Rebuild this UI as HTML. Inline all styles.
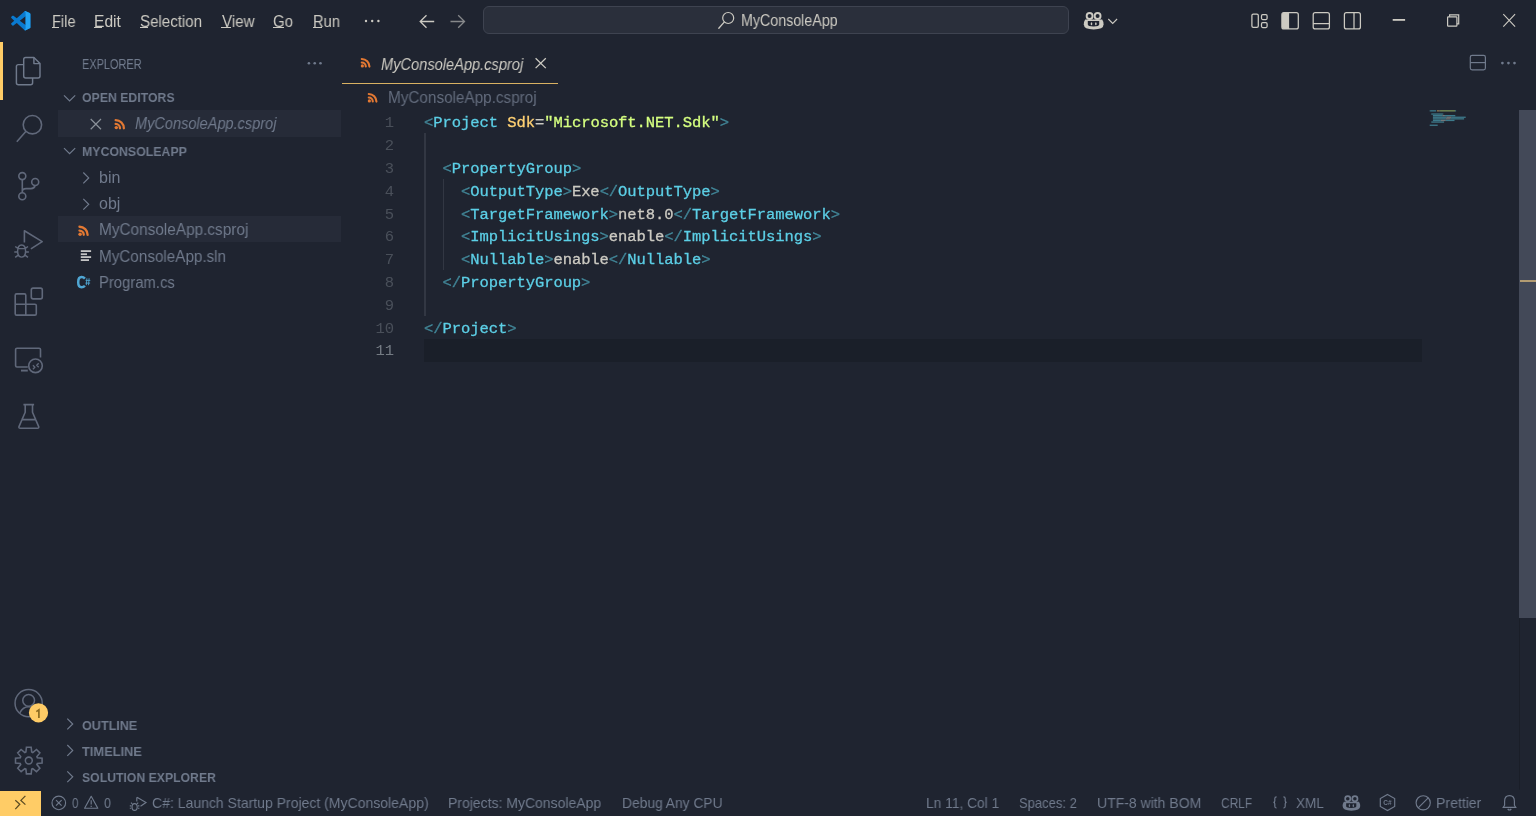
<!DOCTYPE html>
<html><head><meta charset="utf-8">
<style>
html,body{margin:0;padding:0;width:1536px;height:816px;overflow:hidden;background:#1F2430;}
body{position:relative;font-family:"Liberation Sans",sans-serif;}
.a{position:absolute;}
.t{position:absolute;white-space:nowrap;line-height:1;will-change:transform;}
.code{will-change:transform;position:absolute;left:423.9px;font-family:"Liberation Mono",monospace;font-size:15.5px;letter-spacing:-0.06px;line-height:22.8px;white-space:pre;color:#CCCAC2;-webkit-text-stroke:0.3px;}
.ln{will-change:transform;position:absolute;font-family:"Liberation Mono",monospace;font-size:15.5px;letter-spacing:-0.06px;line-height:22.8px;white-space:pre;text-align:right;width:60px;color:rgba(138,145,153,0.4);}
.tg{color:#5CCFE6}.pu{color:rgba(92,207,230,0.5)}.at{color:#FFD173}.st{color:#D5FF80}.op{color:#CCCAC2}
#ov{position:absolute;left:0;top:0;width:1536px;height:816px;overflow:visible}
</style></head><body>
<!-- menu underlines -->
<div class="a" style="left:51.6px;top:27px;width:7.5px;height:1.1px;background:#CCCAC2"></div><div class="a" style="left:93.8px;top:27px;width:8.3px;height:1.1px;background:#CCCAC2"></div><div class="a" style="left:139.8px;top:27px;width:8.2px;height:1.1px;background:#CCCAC2"></div><div class="a" style="left:221.4px;top:27px;width:9.3px;height:1.1px;background:#CCCAC2"></div><div class="a" style="left:273.4px;top:27px;width:10.4px;height:1.1px;background:#CCCAC2"></div><div class="a" style="left:312.5px;top:27px;width:9.1px;height:1.1px;background:#CCCAC2"></div>
<!-- command center -->
<div class="a" style="left:483.3px;top:6px;width:583.3px;height:26.4px;border:1px solid #3e4350;border-radius:6px;background:#2a2f3b"></div>
<!-- activity bar active indicator -->
<div class="a" style="left:0;top:42px;width:2.5px;height:57.6px;background:#FFCC66"></div>
<!-- sidebar selections -->
<div class="a" style="left:57.6px;top:110.4px;width:283.4px;height:26.4px;background:#262b38"></div>
<div class="a" style="left:57.6px;top:216px;width:283.4px;height:26.4px;background:#262b38"></div>
<!-- tab underline -->
<div class="a" style="left:342px;top:82.8px;width:216px;height:1.6px;background:#d9b162"></div>
<!-- current line -->
<div class="a" style="left:424.3px;top:338.8px;width:998px;height:22.8px;background:#1A1F29"></div>
<!-- scrollbar -->
<div class="a" style="left:1519px;top:110.4px;width:17px;height:507.8px;background:#434958"></div>
<div class="a" style="left:1519.5px;top:279.8px;width:16.5px;height:2.6px;background:#b39c72"></div>
<!-- status remote -->
<div class="a" style="left:0;top:790.6px;width:41.1px;height:25.4px;background:#FFCC66"></div>
<div class="a" style="left:424.4px;top:133.20px;width:1.2px;height:182.40px;background:#323743"></div>
<div class="a" style="left:442.9px;top:178.80px;width:1.2px;height:91.20px;background:#323743"></div>
<div class="code" style="top:112.35px"><span class="pu">&lt;</span><span class="tg">Project</span><span class="op"> </span><span class="at">Sdk</span><span class="op">=</span><span class="st">"Microsoft.NET.Sdk"</span><span class="pu">&gt;</span></div>
<div class="ln" style="left:333.50px;top:112.35px;color:rgba(138,145,153,0.4)">1</div>
<div class="code" style="top:135.15px"></div>
<div class="ln" style="left:333.50px;top:135.15px;color:rgba(138,145,153,0.4)">2</div>
<div class="code" style="top:157.95px"><span class="op">  </span><span class="pu">&lt;</span><span class="tg">PropertyGroup</span><span class="pu">&gt;</span></div>
<div class="ln" style="left:333.50px;top:157.95px;color:rgba(138,145,153,0.4)">3</div>
<div class="code" style="top:180.75px"><span class="op">    </span><span class="pu">&lt;</span><span class="tg">OutputType</span><span class="pu">&gt;</span><span class="op">Exe</span><span class="pu">&lt;/</span><span class="tg">OutputType</span><span class="pu">&gt;</span></div>
<div class="ln" style="left:333.50px;top:180.75px;color:rgba(138,145,153,0.4)">4</div>
<div class="code" style="top:203.55px"><span class="op">    </span><span class="pu">&lt;</span><span class="tg">TargetFramework</span><span class="pu">&gt;</span><span class="op">net8.0</span><span class="pu">&lt;/</span><span class="tg">TargetFramework</span><span class="pu">&gt;</span></div>
<div class="ln" style="left:333.50px;top:203.55px;color:rgba(138,145,153,0.4)">5</div>
<div class="code" style="top:226.35px"><span class="op">    </span><span class="pu">&lt;</span><span class="tg">ImplicitUsings</span><span class="pu">&gt;</span><span class="op">enable</span><span class="pu">&lt;/</span><span class="tg">ImplicitUsings</span><span class="pu">&gt;</span></div>
<div class="ln" style="left:333.50px;top:226.35px;color:rgba(138,145,153,0.4)">6</div>
<div class="code" style="top:249.15px"><span class="op">    </span><span class="pu">&lt;</span><span class="tg">Nullable</span><span class="pu">&gt;</span><span class="op">enable</span><span class="pu">&lt;/</span><span class="tg">Nullable</span><span class="pu">&gt;</span></div>
<div class="ln" style="left:333.50px;top:249.15px;color:rgba(138,145,153,0.4)">7</div>
<div class="code" style="top:271.95px"><span class="op">  </span><span class="pu">&lt;/</span><span class="tg">PropertyGroup</span><span class="pu">&gt;</span></div>
<div class="ln" style="left:333.50px;top:271.95px;color:rgba(138,145,153,0.4)">8</div>
<div class="code" style="top:294.75px"></div>
<div class="ln" style="left:333.50px;top:294.75px;color:rgba(138,145,153,0.4)">9</div>
<div class="code" style="top:317.55px"><span class="pu">&lt;/</span><span class="tg">Project</span><span class="pu">&gt;</span></div>
<div class="ln" style="left:333.50px;top:317.55px;color:rgba(138,145,153,0.4)">10</div>
<div class="code" style="top:340.35px"></div>
<div class="ln" style="left:333.50px;top:340.35px;color:rgba(138,145,153,0.8)">11</div>
<span class="t" style="left:51.70px;top:13.89px;font-size:15.60px;color:#CCCAC2;transform:scaleX(0.9363);transform-origin:0 0;">File</span>
<span class="t" style="left:94.40px;top:13.89px;font-size:15.60px;color:#CCCAC2;transform:scaleX(0.9851);transform-origin:0 0;">Edit</span>
<span class="t" style="left:139.60px;top:13.89px;font-size:15.60px;color:#CCCAC2;transform:scaleX(0.9673);transform-origin:0 0;">Selection</span>
<span class="t" style="left:221.60px;top:13.89px;font-size:15.60px;color:#CCCAC2;transform:scaleX(0.9733);transform-origin:0 0;">View</span>
<span class="t" style="left:273.20px;top:13.89px;font-size:15.60px;color:#CCCAC2;transform:scaleX(0.9567);transform-origin:0 0;">Go</span>
<span class="t" style="left:312.60px;top:13.89px;font-size:15.60px;color:#CCCAC2;transform:scaleX(0.9406);transform-origin:0 0;">Run</span>
<span class="t" style="left:740.60px;top:12.79px;font-size:15.60px;color:#CCCAC2;transform:scaleX(0.9140);transform-origin:0 0;">MyConsoleApp</span>
<span class="t" style="left:81.90px;top:57.72px;font-size:13.80px;color:#707A8C;transform:scaleX(0.7926);transform-origin:0 0;">EXPLORER</span>
<span class="t" style="left:81.90px;top:91.28px;font-size:13.60px;color:#707A8C;transform:scaleX(0.9034);transform-origin:0 0;font-weight:700;">OPEN EDITORS</span>
<span class="t" style="left:134.90px;top:116.49px;font-size:15.60px;color:#707A8C;transform:scaleX(0.9323);transform-origin:0 0;font-style:italic;">MyConsoleApp.csproj</span>
<span class="t" style="left:81.90px;top:144.98px;font-size:13.60px;color:#707A8C;transform:scaleX(0.9074);transform-origin:0 0;font-weight:700;">MYCONSOLEAPP</span>
<span class="t" style="left:98.80px;top:169.59px;font-size:15.60px;color:#707A8C;transform:scaleX(1.0288);transform-origin:0 0;">bin</span>
<span class="t" style="left:99.10px;top:196.19px;font-size:15.60px;color:#707A8C;transform:scaleX(1.0240);transform-origin:0 0;">obj</span>
<span class="t" style="left:98.80px;top:222.29px;font-size:15.60px;color:#707A8C;transform:scaleX(0.9848);transform-origin:0 0;">MyConsoleApp.csproj</span>
<span class="t" style="left:98.80px;top:248.79px;font-size:15.60px;color:#707A8C;transform:scaleX(0.9777);transform-origin:0 0;">MyConsoleApp.sln</span>
<span class="t" style="left:98.80px;top:275.09px;font-size:15.60px;color:#707A8C;transform:scaleX(0.9499);transform-origin:0 0;">Program.cs</span>
<span class="t" style="left:81.90px;top:718.58px;font-size:13.60px;color:#707A8C;transform:scaleX(0.9263);transform-origin:0 0;font-weight:700;">OUTLINE</span>
<span class="t" style="left:81.90px;top:745.08px;font-size:13.60px;color:#707A8C;transform:scaleX(0.9449);transform-origin:0 0;font-weight:700;">TIMELINE</span>
<span class="t" style="left:81.90px;top:771.48px;font-size:13.60px;color:#707A8C;transform:scaleX(0.8999);transform-origin:0 0;font-weight:700;">SOLUTION EXPLORER</span>
<span class="t" style="left:380.70px;top:56.99px;font-size:15.60px;color:#CCCAC2;transform:scaleX(0.9376);transform-origin:0 0;font-style:italic;">MyConsoleApp.csproj</span>
<span class="t" style="left:388.20px;top:89.89px;font-size:15.60px;color:#636c7d;transform:scaleX(0.9802);transform-origin:0 0;">MyConsoleApp.csproj</span>
<span class="t" style="left:71.90px;top:796.31px;font-size:14.40px;color:#707A8C;transform:scaleX(0.8000);transform-origin:0 0;">0</span>
<span class="t" style="left:104.00px;top:796.31px;font-size:14.40px;color:#707A8C;transform:scaleX(0.8750);transform-origin:0 0;">0</span>
<span class="t" style="left:151.60px;top:796.31px;font-size:14.40px;color:#707A8C;transform:scaleX(0.9740);transform-origin:0 0;">C#: Launch Startup Project (MyConsoleApp)</span>
<span class="t" style="left:448.40px;top:796.31px;font-size:14.40px;color:#707A8C;transform:scaleX(0.9721);transform-origin:0 0;">Projects: MyConsoleApp</span>
<span class="t" style="left:622.00px;top:796.31px;font-size:14.40px;color:#707A8C;transform:scaleX(0.9590);transform-origin:0 0;">Debug Any CPU</span>
<span class="t" style="left:926.10px;top:796.31px;font-size:14.40px;color:#707A8C;transform:scaleX(0.9569);transform-origin:0 0;">Ln 11, Col 1</span>
<span class="t" style="left:1019.30px;top:796.31px;font-size:14.40px;color:#707A8C;transform:scaleX(0.9047);transform-origin:0 0;">Spaces: 2</span>
<span class="t" style="left:1096.70px;top:796.31px;font-size:14.40px;color:#707A8C;transform:scaleX(0.9729);transform-origin:0 0;">UTF-8 with BOM</span>
<span class="t" style="left:1220.90px;top:796.31px;font-size:14.40px;color:#707A8C;transform:scaleX(0.8271);transform-origin:0 0;">CRLF</span>
<span class="t" style="left:1295.50px;top:796.31px;font-size:14.40px;color:#707A8C;transform:scaleX(0.9426);transform-origin:0 0;">XML</span>
<span class="t" style="left:1436.20px;top:796.31px;font-size:14.40px;color:#707A8C;transform:scaleX(0.9784);transform-origin:0 0;">Prettier</span>
<svg id="ov" width="1536" height="816" viewBox="0 0 1536 816"><g transform="translate(11.1,11.0) scale(0.193)"><path fill="#0A7ACF" d="M96.46 10.8L75.86.87a6.23 6.23 0 0 0-7.1 1.2L29.33 38.04 12.15 25a4.16 4.16 0 0 0-5.32.24L1.36 30.2a4.16 4.16 0 0 0 0 6.16L16.25 50 1.36 63.64a4.16 4.16 0 0 0 0 6.16l5.47 4.96a4.16 4.16 0 0 0 5.32.24l17.18-13.04 39.43 35.97a6.23 6.23 0 0 0 7.1 1.2l20.6-9.92A6.25 6.25 0 0 0 100 83.77V16.23a6.25 6.25 0 0 0-3.54-5.43zM75.02 72.7L45.11 50l29.9-22.7v45.4z"/><path fill="#23A3F2" d="M75.86.87a6.23 6.23 0 0 0-7.1 1.2l6.26 4.6V93.33l-6.26 5.4a6.23 6.23 0 0 0 7.1 1.2l20.6-9.92A6.25 6.25 0 0 0 100 83.77V16.23a6.25 6.25 0 0 0-3.54-5.43z"/></g><circle cx="366.0" cy="21" r="1.2" fill="#CCCAC2"/><circle cx="372.2" cy="21" r="1.2" fill="#CCCAC2"/><circle cx="378.4" cy="21" r="1.2" fill="#CCCAC2"/><path d="M434.2 21.5H420.2M426.5 15.3L420.2 21.5L426.5 27.8" fill="none" stroke="#CCCAC2" stroke-width="1.3"/><path d="M450.5 21.5H464.5M458.2 15.3L464.5 21.5L458.2 27.8" fill="none" stroke="#86888a" stroke-width="1.3"/><circle cx="728.2" cy="18" r="5.5" fill="none" stroke="#CCCAC2" stroke-width="1.2"/><path d="M724.2 22.1L718.8 28.2" fill="none" stroke="#CCCAC2" stroke-width="1.3" stroke-linecap="round"/><g transform="translate(1083.80,12.00) scale(1.000) translate(-1083.8,-12)"><path d="M1085.2 19.4Q1083.8 21.5 1083.8 24.2Q1083.8 29.4 1093.7 29.4Q1103.6 29.4 1103.6 24.2Q1103.6 21.5 1102.2 19.4Z" fill="#CCCAC2"/><circle cx="1089.6" cy="16" r="2.95" fill="#1F2430" stroke="#CCCAC2" stroke-width="1.9"/><circle cx="1097.6" cy="16" r="2.95" fill="#1F2430" stroke="#CCCAC2" stroke-width="1.9"/><path d="M1087.8 21H1099.2V24.5Q1099.2 26.4 1093.5 26.4Q1087.8 26.4 1087.8 24.5Z" fill="#1F2430"/><ellipse cx="1091.5" cy="23.75" rx="0.8" ry="1.5" fill="#CCCAC2"/><ellipse cx="1095.85" cy="23.75" rx="0.8" ry="1.5" fill="#CCCAC2"/></g><path d="M1108.3 19 L1112.7 23.4 L1117.1 19" fill="none" stroke="#CCCAC2" stroke-width="1.1"/><g fill="none" stroke="#CCCAC2" stroke-width="1.25"><rect x="1251.9" y="14.1" width="6.4" height="13.2" rx="1.4"/><rect x="1261.5" y="14.7" width="5.6" height="4.8" rx="1.2"/><rect x="1261.5" y="22.7" width="5.6" height="4.8" rx="1.2"/><rect x="1281.9" y="12.7" width="16.4" height="16.2" rx="2"/><rect x="1313.2" y="12.7" width="16.2" height="16.2" rx="2"/><path d="M1313.2 23.6H1329.4"/><rect x="1344.4" y="12.7" width="16" height="16.2" rx="2"/><path d="M1354 12.7V28.9"/></g><path d="M1283.9 12.7H1289.1V28.9H1283.9Q1281.9 28.9 1281.9 26.9V14.7Q1281.9 12.7 1283.9 12.7Z" fill="#CCCAC2"/><rect x="1392.7" y="19" width="12.4" height="1.8" fill="#CCCAC2"/><g fill="none" stroke="#CCCAC2" stroke-width="1.2"><rect x="1447.6" y="16.8" width="9.3" height="9.3" rx="0.6"/><path d="M1449.6 16.8V14.8H1458.7V23.9H1456.9"/></g><path d="M1503.3 14.2L1515.1 26.7M1515.1 14.2L1503.3 26.7" fill="none" stroke="#CCCAC2" stroke-width="1.1"/><g fill="none" stroke="#707A8C" stroke-width="1.45" stroke-linejoin="round"><path d="M25.7 57.5H33.9L40 63.6V75.9Q40 77.9 38 77.9H25.7Q23.7 77.9 23.7 75.9V59.5Q23.7 57.5 25.7 57.5Z"/><path d="M33.9 57.5V63.6H40"/><path d="M23.7 64.6H18.4Q16.4 64.6 16.4 66.6V82.8Q16.4 84.8 18.4 84.8H30.6Q32.6 84.8 32.6 82.8V77.9"/></g><g fill="none" stroke="#60687A" stroke-width="1.6" stroke-linejoin="round"><circle cx="32.4" cy="124.7" r="9.2"/><path d="M26 131.3L16.8 141.8" stroke-width="1.6"/><circle cx="22.3" cy="176.1" r="3.5"/><circle cx="35.2" cy="182" r="3.5"/><circle cx="22.3" cy="196.2" r="3.5"/><path d="M22.3 179.6V192.7M35 185.5Q34.5 188.6 31 188.6H26Q22.3 188.6 22.3 191.5"/><path d="M24.4 242.4V230.8L42.2 241.6L30.9 248.9"/><path d="M17.6 251.3Q17.6 244.9 21.6 244.9Q25.6 244.9 25.6 251.3Q25.6 257.1 21.6 257.1Q17.6 257.1 17.6 251.3ZM17.8 248.6H25.4M15.2 246.5L17.9 248.4M28 246.5L25.3 248.4M14.3 252H17.6M28.9 252H25.6M15.2 257.3L17.9 255.3M28 257.3L25.3 255.3" stroke-width="1.45"/><path d="M16.6 293.9H24.4Q25.8 293.9 25.8 295.3V304.2H34.9Q36.3 304.2 36.3 305.6V313.7Q36.3 315.1 34.9 315.1H16.6Q15.2 315.1 15.2 313.7V295.3Q15.2 293.9 16.6 293.9Z"/><path d="M15.2 304.2H25.8V315.1"/><rect x="31.3" y="288.1" width="11" height="10.8" rx="1.8"/><path d="M27.8 367H17Q15.6 367 15.6 365.6V349.6Q15.6 348.2 17 348.2H39.1Q40.5 348.2 40.5 349.6V357.5"/><path d="M21 370.6H27.8" stroke-width="1.9"/><circle cx="35.5" cy="365.8" r="6.8"/><path d="M32.9 365.3L34.9 367.2L32.9 369.2M38.7 363.2L36.7 365.2L38.7 367.2" stroke-width="1.3"/><path d="M23.4 404.6H34.1M25.2 404.6V412.3L19 426.6Q18.5 428.3 20.3 428.3H37.4Q39.2 428.3 38.7 426.6L32.5 412.3V404.6M21.3 419.6H36.4"/><circle cx="28.65" cy="703.2" r="13.6" stroke-width="1.5"/><circle cx="28.65" cy="700.35" r="5.9" stroke-width="1.5"/><path d="M19.8 712.8Q23 706.8 28.6 706.8Q34.2 706.8 37.4 712.8" stroke-width="1.5"/></g><path d="M25.90 752.08 L26.41 747.31 L31.19 747.31 L31.70 752.08 L32.77 752.52 L36.50 749.51 L39.89 752.90 L36.88 756.63 L37.32 757.70 L42.09 758.21 L42.09 762.99 L37.32 763.50 L36.88 764.57 L39.89 768.30 L36.50 771.69 L32.77 768.68 L31.70 769.12 L31.19 773.89 L26.41 773.89 L25.90 769.12 L24.83 768.68 L21.10 771.69 L17.71 768.30 L20.72 764.57 L20.28 763.50 L15.51 762.99 L15.51 758.21 L20.28 757.70 L20.72 756.63 L17.71 752.90 L21.10 749.51 L24.83 752.52Z" fill="none" stroke="#60687A" stroke-width="1.55" stroke-linejoin="miter"/><circle cx="28.8" cy="760.6" r="3.45" fill="none" stroke="#60687A" stroke-width="1.55"/><circle cx="38.5" cy="712.8" r="9.6" fill="#FFCC66"/><path d="M36.3 711.6L38.9 709.9V718.1" fill="none" stroke="#8c6b22" stroke-width="1.7"/><circle cx="308.90" cy="63.2" r="1.3" fill="#707A8C"/><circle cx="314.70" cy="63.2" r="1.3" fill="#707A8C"/><circle cx="320.50" cy="63.2" r="1.3" fill="#707A8C"/><path d="M64.0 95.3L69.6 100.9L75.2 95.3" fill="none" stroke="#707A8C" stroke-width="1.2"/><path d="M64.0 148.1L69.6 153.7L75.2 148.1" fill="none" stroke="#707A8C" stroke-width="1.2"/><path d="M83.3 172.5L88.7 177.9L83.3 183.3" fill="none" stroke="#707A8C" stroke-width="1.2"/><path d="M83.3 198.9L88.7 204.3L83.3 209.7" fill="none" stroke="#707A8C" stroke-width="1.2"/><path d="M67.3 718.6L72.7 724.0L67.3 729.4" fill="none" stroke="#707A8C" stroke-width="1.2"/><path d="M67.3 745.0L72.7 750.4L67.3 755.8" fill="none" stroke="#707A8C" stroke-width="1.2"/><path d="M67.3 771.4L72.7 776.8L67.3 782.2" fill="none" stroke="#707A8C" stroke-width="1.2"/><path d="M90.7 119L101 129.2M101 119L90.7 129.2" fill="none" stroke="#8A9199" stroke-width="1.2"/><g transform="translate(114.50,119.00) scale(1.050)" fill="none" stroke="#E37933" stroke-width="2.1" stroke-linecap="round"><circle cx="1.7" cy="8.2" r="1.65" fill="#E37933" stroke="none"/><path d="M1.1 4.7A4.1 4.1 0 0 1 5.2 8.8M1.1 1.1A7.8 7.8 0 0 1 8.9 8.9" stroke-width="2.2"/></g><g transform="translate(78.30,225.60) scale(1.050)" fill="none" stroke="#E37933" stroke-width="2.1" stroke-linecap="round"><circle cx="1.7" cy="8.2" r="1.65" fill="#E37933" stroke="none"/><path d="M1.1 4.7A4.1 4.1 0 0 1 5.2 8.8M1.1 1.1A7.8 7.8 0 0 1 8.9 8.9" stroke-width="2.2"/></g><g transform="translate(360.70,57.90) scale(0.980)" fill="none" stroke="#E37933" stroke-width="2.1" stroke-linecap="round"><circle cx="1.7" cy="8.2" r="1.65" fill="#E37933" stroke="none"/><path d="M1.1 4.7A4.1 4.1 0 0 1 5.2 8.8M1.1 1.1A7.8 7.8 0 0 1 8.9 8.9" stroke-width="2.2"/></g><g transform="translate(367.70,92.90) scale(0.980)" fill="none" stroke="#E37933" stroke-width="2.1" stroke-linecap="round"><circle cx="1.7" cy="8.2" r="1.65" fill="#E37933" stroke="none"/><path d="M1.1 4.7A4.1 4.1 0 0 1 5.2 8.8M1.1 1.1A7.8 7.8 0 0 1 8.9 8.9" stroke-width="2.2"/></g><rect x="80.8" y="250.2" width="10.3" height="1.8" fill="#C4C4C4"/><rect x="80.8" y="253.3" width="6.2" height="1.8" fill="#C4C4C4"/><rect x="80.8" y="256.2" width="10.3" height="1.8" fill="#C4C4C4"/><rect x="80.8" y="259.2" width="8.2" height="1.8" fill="#C4C4C4"/><path d="M84.9 278.6Q83.6 277.1 81.6 277.1Q78.2 277.1 78.2 282.2Q78.2 287.2 81.6 287.2Q83.6 287.2 84.9 285.7" fill="none" stroke="#4FA6D3" stroke-width="2.5"/><path d="M86.9 278.3L86.3 285.2M89.1 278.3L88.5 285.2M85.6 280.4H90.3M85.4 283.1H90.1" fill="none" stroke="#4FA6D3" stroke-width="0.9"/><path d="M535.6 58.2L545.8 68.1M545.8 58.2L535.6 68.1" fill="none" stroke="#CCCAC2" stroke-width="1.3"/><g fill="none" stroke="#707A8C" stroke-width="1.2"><rect x="1470.3" y="55.4" width="15.1" height="14.4" rx="1.8"/><path d="M1470.3 62.6H1485.4"/></g><circle cx="1502.40" cy="63.1" r="1.35" fill="#707A8C"/><circle cx="1508.45" cy="63.1" r="1.35" fill="#707A8C"/><circle cx="1514.50" cy="63.1" r="1.35" fill="#707A8C"/><rect x="1429.70" y="110.20" width="0.80" height="1.3" fill="#5CCFE6" opacity="0.50"/><rect x="1430.50" y="110.20" width="5.60" height="1.3" fill="#5CCFE6" opacity="0.50"/><rect x="1436.90" y="110.20" width="2.40" height="1.3" fill="#FFD173" opacity="0.50"/><rect x="1439.30" y="110.20" width="0.80" height="1.3" fill="#CCCAC2" opacity="0.50"/><rect x="1440.10" y="110.20" width="15.20" height="1.3" fill="#D5FF80" opacity="0.50"/><rect x="1455.30" y="110.20" width="0.80" height="1.3" fill="#5CCFE6" opacity="0.50"/><rect x="1431.30" y="113.40" width="0.80" height="1.3" fill="#5CCFE6" opacity="0.50"/><rect x="1432.10" y="113.40" width="10.40" height="1.3" fill="#5CCFE6" opacity="0.50"/><rect x="1442.50" y="113.40" width="0.80" height="1.3" fill="#5CCFE6" opacity="0.50"/><rect x="1432.90" y="115.00" width="9.60" height="1.3" fill="#5CCFE6" opacity="0.50"/><rect x="1442.50" y="115.00" width="2.40" height="1.3" fill="#CCCAC2" opacity="0.50"/><rect x="1444.90" y="115.00" width="10.40" height="1.3" fill="#5CCFE6" opacity="0.50"/><rect x="1432.90" y="116.60" width="13.60" height="1.3" fill="#5CCFE6" opacity="0.50"/><rect x="1446.50" y="116.60" width="4.80" height="1.3" fill="#CCCAC2" opacity="0.50"/><rect x="1451.30" y="116.60" width="14.40" height="1.3" fill="#5CCFE6" opacity="0.50"/><rect x="1432.90" y="118.20" width="12.80" height="1.3" fill="#5CCFE6" opacity="0.50"/><rect x="1445.70" y="118.20" width="4.80" height="1.3" fill="#CCCAC2" opacity="0.50"/><rect x="1450.50" y="118.20" width="13.60" height="1.3" fill="#5CCFE6" opacity="0.50"/><rect x="1432.90" y="119.80" width="8.00" height="1.3" fill="#5CCFE6" opacity="0.50"/><rect x="1440.90" y="119.80" width="4.80" height="1.3" fill="#CCCAC2" opacity="0.50"/><rect x="1445.70" y="119.80" width="8.80" height="1.3" fill="#5CCFE6" opacity="0.50"/><rect x="1431.30" y="121.40" width="12.80" height="1.3" fill="#5CCFE6" opacity="0.50"/><rect x="1429.70" y="124.60" width="8.00" height="1.3" fill="#5CCFE6" opacity="0.50"/><rect x="1519" y="618.2" width="1" height="171.4" fill="#1a1e28"/><path d="M15.3 800.3L19.8 804.2L15.3 809.2M25.4 795.9L20.9 800.4L25.4 804.6" fill="none" stroke="#5b4b22" stroke-width="1.25"/><g fill="none" stroke="#707A8C" stroke-width="1.15"><circle cx="58.8" cy="802.9" r="6.8"/><path d="M56 800.1L61.6 805.7M61.6 800.1L56 805.7"/><path d="M91.2 796.3L97.8 808.2H84.6Z" stroke-linejoin="round"/><path d="M91.2 800.3V804.6M91.2 805.8V807"/><path d="M137 797.2L146 802.5L140.5 806.3M136.8 797.2V801.6"/><ellipse cx="134.6" cy="807" rx="2.6" ry="3.4"/><path d="M131.2 805.8H129.8M138 805.8H139.4M131.2 808.2H129.8M138 808.2H139.4M132.2 803.8L131 802.6M137 803.8L138.2 802.6"/><path d="M1276.6 796.8Q1274.8 796.8 1274.8 798.6V801Q1274.8 802.4 1273.4 802.4Q1274.8 802.4 1274.8 803.8V806.2Q1274.8 808 1276.6 808M1283.4 796.8Q1285.2 796.8 1285.2 798.6V801Q1285.2 802.4 1286.6 802.4Q1285.2 802.4 1285.2 803.8V806.2Q1285.2 808 1283.4 808"/><path d="M1387.5 794.4L1394.7 798.5V806.5L1387.5 810.6L1380.3 806.5V798.5Z"/><circle cx="1423.2" cy="802.8" r="7.1"/><path d="M1418.2 807.8L1428.2 797.8"/><path d="M1509.5 795.6Q1504.6 795.6 1504.6 801.2V805.2L1503.2 807.4H1515.8L1514.4 805.2V801.2Q1514.4 795.6 1509.5 795.6ZM1507.7 809Q1509.5 811 1511.3 809"/></g><text x="1387.5" y="805.4" text-anchor="middle" style="font-family:Liberation Sans;font-weight:700;font-size:6.5px" fill="#707A8C">C#</text><g transform="translate(1342.60,795.20) scale(0.890) translate(-1083.8,-12)"><path d="M1085.2 19.4Q1083.8 21.5 1083.8 24.2Q1083.8 29.4 1093.7 29.4Q1103.6 29.4 1103.6 24.2Q1103.6 21.5 1102.2 19.4Z" fill="#707A8C"/><circle cx="1089.6" cy="16" r="2.95" fill="#1F2430" stroke="#707A8C" stroke-width="1.9"/><circle cx="1097.6" cy="16" r="2.95" fill="#1F2430" stroke="#707A8C" stroke-width="1.9"/><path d="M1087.8 21H1099.2V24.5Q1099.2 26.4 1093.5 26.4Q1087.8 26.4 1087.8 24.5Z" fill="#1F2430"/><ellipse cx="1091.5" cy="23.75" rx="0.8" ry="1.5" fill="#707A8C"/><ellipse cx="1095.85" cy="23.75" rx="0.8" ry="1.5" fill="#707A8C"/></g></svg>
</body></html>
